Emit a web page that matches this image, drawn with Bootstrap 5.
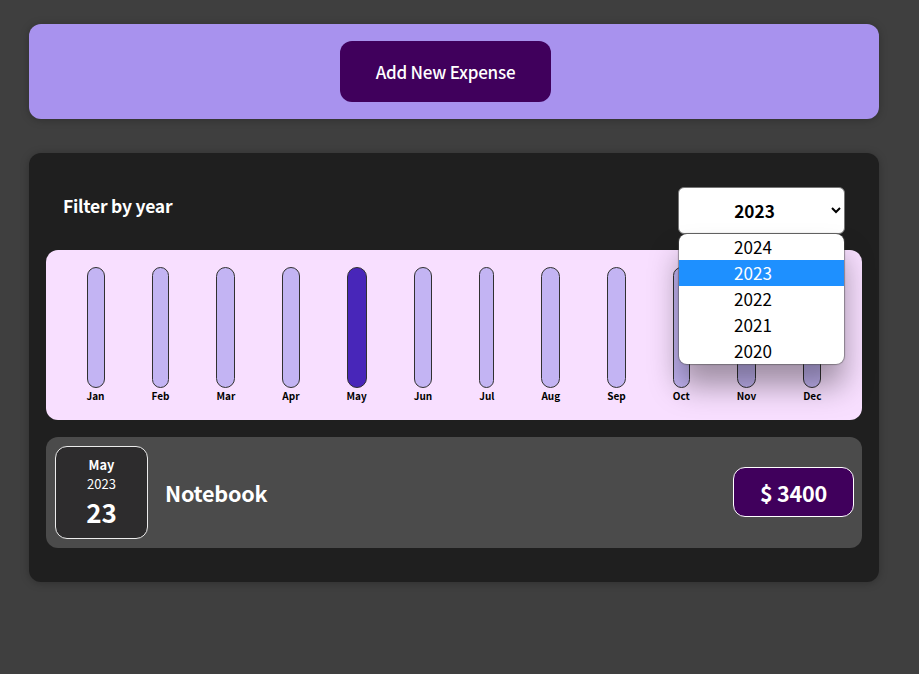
<!DOCTYPE html>
<html lang="en">
<head>
<meta charset="utf-8">
<title>Expenses</title>
<link href="https://cdn.jsdelivr.net/npm/bootstrap@5.3.0/dist/css/bootstrap.min.css" rel="stylesheet">
<style>
html, body { height: 100%; }
body { background: #3f3f3f; font-family: "Noto Sans CJK SC", "Noto Sans", sans-serif; overflow: hidden; }
.page-wrap { margin: 24px 40px 0 29px; }
.add-panel { background: #a892ee; border-radius: 12px; padding: 17px; box-shadow: 0 1px 8px rgba(0,0,0,.25); }
.add-btn { background: #40005c; color: #fff; border: 0; border-radius: 12px; font-size: 17px; letter-spacing: -.23px; font-weight: 500; line-height: 27px; padding: 17px 35.5px; margin-right: 17px; }
.list-panel { background: #1f1f1f; border-radius: 12px; margin-top: 34px; padding: 17px 17px 34px; box-shadow: 0 1px 8px rgba(0,0,0,.25); }
.filter-row { padding: 17px 17px 16px; position: relative; }
.filter-label { color: #fff; font-size: 17.5px; letter-spacing: -.25px; font-weight: 700; line-height: 27px; margin-bottom: 10px; }
.year-select { width: 167px; height: 47px; font-family: inherit; font-size: 17.2px; font-weight: 700; text-align: center; border-radius: 6px; background: #fff; color: #000; border: 1px solid #767676; padding: 0 10px 1px 8px; }
.year-popup { position: absolute; top: 64px; right: 18px; width: 165px; background: #fff; border-radius: 8px; overflow: hidden; box-shadow: 0 0 1px 1px rgba(80,80,80,.55), 0 22px 30px rgba(0,0,0,.36); z-index: 5; }
.year-opt { height: 26px; line-height: 25px; font-size: 17.1px; color: #000; padding-left: 55px; }
.year-opt.picked { background: #1e90ff; color: #fff; }
.chart-panel { background: #f8dfff; border-radius: 12px; padding: 17px; height: 170px; }
.bar-col { height: 137px; }
.bar-track { flex: 1 1 auto; width: 100%; background: #c3b4f3; border: 1px solid #313131; border-radius: 12px; }
.bar-track.active { background: #4826b9; }
.bar-name { font-size: 10px; font-weight: 700; line-height: 16px; color: #000; text-align: center; }
.expense-row { background: #4b4b4b; border-radius: 12px; margin-top: 17px; padding: 9px 8px 9px 9px; }
.date-box { width: 93px; height: 93px; background: #2d2c2d; border: 1px solid #ececec; border-radius: 12px; color: #fff; padding-bottom: 2px; }
.date-month { font-size: 12.8px; font-weight: 700; line-height: 19px; }
.date-year { font-size: 13px; line-height: 19px; }
.date-day { font-size: 26px; font-weight: 700; line-height: 34px; margin-top: 2px; }
.expense-name { color: #fff; font-size: 21.6px; letter-spacing: -.25px; font-weight: 700; margin: 0 0 0 17px; line-height: 30px; }
.amount-box { background: #40005c; color: #fff; border: 1px solid #fff; border-radius: 12px; font-size: 21.6px; letter-spacing: -.25px; font-weight: 700; width: 121px; height: 50px; margin-bottom: 2px; padding-top: 3px; }
</style>
</head>
<body>
<div class="page-wrap">
  <div class="add-panel d-flex justify-content-center">
    <button type="button" class="add-btn">Add New Expense</button>
  </div>
  <div class="list-panel">
    <div class="filter-row d-flex justify-content-between align-items-center">
      <div class="filter-label">Filter by year</div>
      <select class="year-select" aria-label="Filter by year">
        <option>2024</option>
        <option selected>2023</option>
        <option>2022</option>
        <option>2021</option>
        <option>2020</option>
      </select>
      <div class="year-popup">
        <div class="year-opt">2024</div>
        <div class="year-opt picked">2023</div>
        <div class="year-opt">2022</div>
        <div class="year-opt">2021</div>
        <div class="year-opt">2020</div>
      </div>
    </div>
    <div class="chart-panel d-flex justify-content-around">
      <div class="bar-col d-flex flex-column align-items-center"><div class="bar-track"></div><div class="bar-name">Jan</div></div>
      <div class="bar-col d-flex flex-column align-items-center"><div class="bar-track"></div><div class="bar-name">Feb</div></div>
      <div class="bar-col d-flex flex-column align-items-center"><div class="bar-track"></div><div class="bar-name">Mar</div></div>
      <div class="bar-col d-flex flex-column align-items-center"><div class="bar-track"></div><div class="bar-name">Apr</div></div>
      <div class="bar-col d-flex flex-column align-items-center"><div class="bar-track active"></div><div class="bar-name">May</div></div>
      <div class="bar-col d-flex flex-column align-items-center"><div class="bar-track"></div><div class="bar-name">Jun</div></div>
      <div class="bar-col d-flex flex-column align-items-center"><div class="bar-track"></div><div class="bar-name">Jul</div></div>
      <div class="bar-col d-flex flex-column align-items-center"><div class="bar-track"></div><div class="bar-name">Aug</div></div>
      <div class="bar-col d-flex flex-column align-items-center"><div class="bar-track"></div><div class="bar-name">Sep</div></div>
      <div class="bar-col d-flex flex-column align-items-center"><div class="bar-track"></div><div class="bar-name">Oct</div></div>
      <div class="bar-col d-flex flex-column align-items-center"><div class="bar-track"></div><div class="bar-name">Nov</div></div>
      <div class="bar-col d-flex flex-column align-items-center"><div class="bar-track"></div><div class="bar-name">Dec</div></div>
    </div>
    <div class="expense-row d-flex align-items-center">
      <div class="date-box d-flex flex-column align-items-center justify-content-center">
        <div class="date-month">May</div>
        <div class="date-year">2023</div>
        <div class="date-day">23</div>
      </div>
      <h2 class="expense-name flex-grow-1">Notebook</h2>
      <div class="amount-box d-flex align-items-center justify-content-center">$ 3400</div>
    </div>
  </div>
</div>
<script src="https://cdn.jsdelivr.net/npm/bootstrap@5.3.0/dist/js/bootstrap.bundle.min.js"></script>
</body>
</html>
